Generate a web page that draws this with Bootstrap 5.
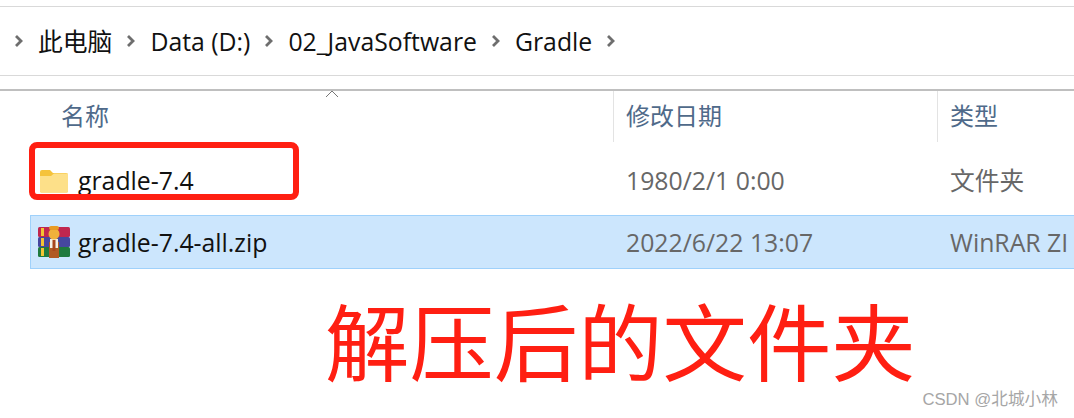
<!DOCTYPE html>
<html lang="zh"><head><meta charset="utf-8">
<link href="https://cdn.jsdelivr.net/npm/bootstrap@5.3.0/dist/css/bootstrap.min.css" rel="stylesheet">
<style>
html,body{margin:0;width:1074px;height:418px;overflow:hidden;background:#fff}
body{font-family:"Open Sans","Noto Sans CJK SC",sans-serif;font-size:24.8px;color:#111;position:relative}
.crumbs{margin-top:6px;height:70px;border-top:1px solid #d9d9d9;border-bottom:1px solid #d9d9d9;padding-left:14px;gap:14px;line-height:1}
.crumbs svg{flex:none}
.crumbs span{white-space:nowrap}
.headrow{margin-top:13px;border-top:2px solid #bfbfbf;height:51px;position:relative;color:#4f6a8a;font-size:24px}
.sort-caret{position:absolute;left:325px;top:-1px}
.cols{display:grid;grid-template-columns:613px 324px 137px}
.cell-h{padding-left:12px;border-left:1px solid #e3e3e3;height:51px;line-height:50px;white-space:nowrap;overflow:hidden}
.cell-h.first{border-left:0;padding-left:61px}
.frow{height:53px;align-items:center;color:#676767;white-space:nowrap}
.frow>div{padding-left:13px;overflow:hidden;line-height:53px}
.frow>div.name{color:#111;display:flex;align-items:center}
.r1{margin-top:14px;margin-bottom:8px}
.name-r1{padding-left:39px!important;gap:9px}
.name-r2{padding-left:7px!important;gap:8px}
.r2{margin-left:30px;grid-template-columns:583px 324px 137px;background:#cce6fd;border:1px solid #9fd1fb;border-right:0;height:54px}
.date-r2{padding-left:12px!important}
.bigtxt{margin:18px 0 0 325px;font-family:"Noto Sans CJK SC",sans-serif;font-size:84.400px;line-height:102px;color:#ff1f12;white-space:nowrap}
.redbox{position:absolute;left:29px;top:142px;width:270px;height:58px;border:6px solid #ff1f12;border-radius:8px}
.wm{position:absolute;right:16px;top:389px;font-size:16.700px;line-height:22px;color:#a6a6a6;font-family:"Liberation Sans","Noto Sans CJK SC",sans-serif}
</style></head><body>
<div class="crumbs d-flex align-items-center">
<svg width="10" height="14" viewBox="0 0 10 14"><path d="M2 2l5 5-5 5" fill="none" stroke="#6e6e6e" stroke-width="2.800"/></svg>
<span>此电脑</span>
<svg width="10" height="14" viewBox="0 0 10 14"><path d="M2 2l5 5-5 5" fill="none" stroke="#6e6e6e" stroke-width="2.800"/></svg>
<span>Data (D:)</span>
<svg width="10" height="14" viewBox="0 0 10 14"><path d="M2 2l5 5-5 5" fill="none" stroke="#6e6e6e" stroke-width="2.800"/></svg>
<span>02_JavaSoftware</span>
<svg width="10" height="14" viewBox="0 0 10 14"><path d="M2 2l5 5-5 5" fill="none" stroke="#6e6e6e" stroke-width="2.800"/></svg>
<span>Gradle</span>
<svg width="10" height="14" viewBox="0 0 10 14"><path d="M2 2l5 5-5 5" fill="none" stroke="#6e6e6e" stroke-width="2.800"/></svg>
</div>
<div class="headrow cols">
<svg class="sort-caret" width="14" height="8" viewBox="0 0 14 8"><path d="M1 7l6-6 6 6" fill="none" stroke="#777" stroke-width="1"/></svg>
<div class="cell-h first">名称</div><div class="cell-h">修改日期</div><div class="cell-h">类型</div>
</div>
<div class="cols frow r1">
<div class="name name-r1">
<svg width="30" height="24" viewBox="0 0 30 24"><path d="M1 3a2 2 0 0 1 2-2h8l3 3h13a2 2 0 0 1 2 2v16a1.500 1.500 0 0 1-1.500 1.500h-25A1.500 1.500 0 0 1 1 22z" fill="#f5c33b"/><path d="M1 7h11l3-2.500h13.500a.5.5 0 0 1 .5.5v17a1.500 1.500 0 0 1-1.500 1.500h-25A1.500 1.500 0 0 1 1 22z" fill="#fde089"/></svg>
<span>gradle-7.4</span></div>
<div>1980/2/1 0:00</div><div>文件夹</div>
</div>
<div class="cols frow r2">
<div class="name name-r2">
<svg width="32" height="32" viewBox="0 0 32 32"><rect x="0" y="1" width="32" height="10" rx="1.500" fill="#c0274f"/><rect x="0" y="11" width="32" height="10" rx="1.500" fill="#46479f"/><rect x="0" y="21" width="32" height="10" rx="1.500" fill="#1f7a3e"/><rect x="3" y="2" width="3" height="8" fill="#f3c433"/><rect x="3" y="12" width="3" height="8" fill="#f3c433"/><rect x="3" y="22" width="3" height="8" fill="#f3c433"/><rect x="11" y="16" width="10" height="16" fill="#b05a24"/><rect x="12" y="13" width="8" height="9" fill="#f4f0e6"/><circle cx="16" cy="8" r="5.500" fill="#f0b13c"/><rect x="11" y="0" width="10" height="4" rx="2" fill="#e89b24"/><rect x="14.500" y="14" width="3" height="11" fill="#a8461c"/></svg>
<span>gradle-7.4-all.zip</span></div>
<div class="date-r2">2022/6/22 13:07</div><div class="date-r2">WinRAR ZI</div>
</div>
<div class="bigtxt">解压后的文件夹</div>
<div class="redbox"></div>
<div class="wm">CSDN @北城小林</div>
</body></html>
